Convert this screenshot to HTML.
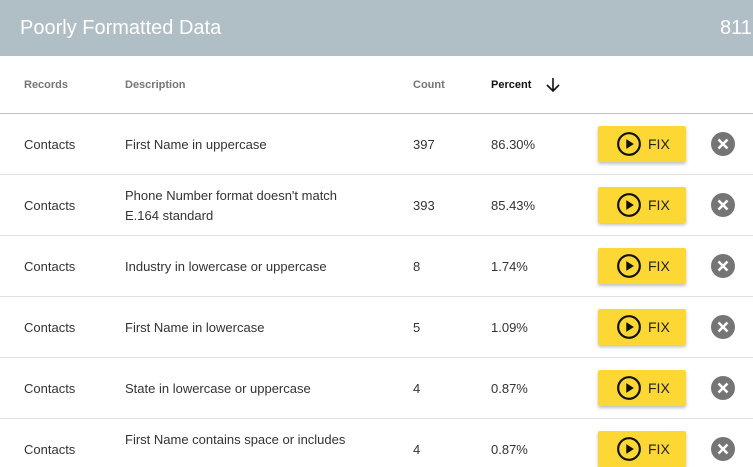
<!DOCTYPE html>
<html><head><style>
*{margin:0;padding:0;box-sizing:border-box}
body{width:753px;height:453px;overflow:hidden;background:#fff;font-family:"Liberation Sans",sans-serif;position:relative}
.hdr{position:absolute;left:0;top:0;width:753px;height:56px;background:#b0bec5;color:#fff;font-size:20px}
.hdr .t{position:absolute;left:20px;top:17px}
.hdr .n{position:absolute;left:720px;top:17px;white-space:nowrap}
.th{position:absolute;top:79px;font-size:11px;font-weight:bold;color:#757575}
.line{position:absolute;left:0;width:753px;height:1px;background:#e0e0e0}
.c{position:absolute;font-size:13px;color:#333;line-height:20px;margin-top:1px}
.fix{position:absolute;left:598px;width:88px;height:36px;background:#fdd835;border-radius:2px;box-shadow:0 2px 3px rgba(0,0,0,.25);font-size:14px;color:#212121}
.fix svg{position:absolute;left:18px;top:5px}
.fix span{position:absolute;left:50px;top:10px}
.x{position:absolute;left:711px;width:24px;height:24px}
</style></head><body>
<div class="hdr"><span class="t">Poorly Formatted Data</span><span class="n">811</span></div>
<div class="th" style="left:24px">Records</div>
<div class="th" style="left:125px">Description</div>
<div class="th" style="left:413px">Count</div>
<div class="th" style="left:491px;color:#111">Percent</div>
<svg style="position:absolute;left:545px;top:77px" width="16" height="16" viewBox="0 0 16 16"><path d="M8 1v13M2 8l6 6 6-6" stroke="#111" stroke-width="1.6" fill="none"/></svg>
<div class="line" style="top:113px;background:#bdbdbd"></div>
<div class="line" style="top:174px"></div>
<div class="line" style="top:235px"></div>
<div class="line" style="top:296px"></div>
<div class="line" style="top:357px"></div>
<div class="line" style="top:418px"></div>

<div class="c" style="left:24px;top:134px">Contacts</div><div class="c" style="left:125px;top:134px">First Name in uppercase</div><div class="c" style="left:413px;top:134px">397</div><div class="c" style="left:491px;top:134px">86.30%</div>
<div class="c" style="left:24px;top:195px">Contacts</div><div class="c" style="left:125px;top:185px">Phone Number format doesn't match<br>E.164 standard</div><div class="c" style="left:413px;top:195px">393</div><div class="c" style="left:491px;top:195px">85.43%</div>
<div class="c" style="left:24px;top:256px">Contacts</div><div class="c" style="left:125px;top:256px">Industry in lowercase or uppercase</div><div class="c" style="left:413px;top:256px">8</div><div class="c" style="left:491px;top:256px">1.74%</div>
<div class="c" style="left:24px;top:317px">Contacts</div><div class="c" style="left:125px;top:317px">First Name in lowercase</div><div class="c" style="left:413px;top:317px">5</div><div class="c" style="left:491px;top:317px">1.09%</div>
<div class="c" style="left:24px;top:378px">Contacts</div><div class="c" style="left:125px;top:378px">State in lowercase or uppercase</div><div class="c" style="left:413px;top:378px">4</div><div class="c" style="left:491px;top:378px">0.87%</div>
<div class="c" style="left:24px;top:439px">Contacts</div><div class="c" style="left:125px;top:429px">First Name contains space or includes</div><div class="c" style="left:413px;top:439px">4</div><div class="c" style="left:491px;top:439px">0.87%</div>

<div class="fix" style="top:126px"><svg width="26" height="26" viewBox="0 0 24 24"><circle cx="12" cy="12" r="10" stroke="#111" stroke-width="2" fill="none"/><path d="M9.5 7.5v9l7-4.5z" fill="#111"/></svg><span>FIX</span></div>
<div class="fix" style="top:187px"><svg width="26" height="26" viewBox="0 0 24 24"><circle cx="12" cy="12" r="10" stroke="#111" stroke-width="2" fill="none"/><path d="M9.5 7.5v9l7-4.5z" fill="#111"/></svg><span>FIX</span></div>
<div class="fix" style="top:248px"><svg width="26" height="26" viewBox="0 0 24 24"><circle cx="12" cy="12" r="10" stroke="#111" stroke-width="2" fill="none"/><path d="M9.5 7.5v9l7-4.5z" fill="#111"/></svg><span>FIX</span></div>
<div class="fix" style="top:309px"><svg width="26" height="26" viewBox="0 0 24 24"><circle cx="12" cy="12" r="10" stroke="#111" stroke-width="2" fill="none"/><path d="M9.5 7.5v9l7-4.5z" fill="#111"/></svg><span>FIX</span></div>
<div class="fix" style="top:370px"><svg width="26" height="26" viewBox="0 0 24 24"><circle cx="12" cy="12" r="10" stroke="#111" stroke-width="2" fill="none"/><path d="M9.5 7.5v9l7-4.5z" fill="#111"/></svg><span>FIX</span></div>
<div class="fix" style="top:431px"><svg width="26" height="26" viewBox="0 0 24 24"><circle cx="12" cy="12" r="10" stroke="#111" stroke-width="2" fill="none"/><path d="M9.5 7.5v9l7-4.5z" fill="#111"/></svg><span>FIX</span></div>

<svg class="x" style="top:132px" viewBox="0 0 24 24"><circle cx="12" cy="12" r="12" fill="#757575"/><path d="M7.5 7.5l9 9M16.5 7.5l-9 9" stroke="#fff" stroke-width="2.6"/></svg>
<svg class="x" style="top:193px" viewBox="0 0 24 24"><circle cx="12" cy="12" r="12" fill="#757575"/><path d="M7.5 7.5l9 9M16.5 7.5l-9 9" stroke="#fff" stroke-width="2.6"/></svg>
<svg class="x" style="top:254px" viewBox="0 0 24 24"><circle cx="12" cy="12" r="12" fill="#757575"/><path d="M7.5 7.5l9 9M16.5 7.5l-9 9" stroke="#fff" stroke-width="2.6"/></svg>
<svg class="x" style="top:315px" viewBox="0 0 24 24"><circle cx="12" cy="12" r="12" fill="#757575"/><path d="M7.5 7.5l9 9M16.5 7.5l-9 9" stroke="#fff" stroke-width="2.6"/></svg>
<svg class="x" style="top:376px" viewBox="0 0 24 24"><circle cx="12" cy="12" r="12" fill="#757575"/><path d="M7.5 7.5l9 9M16.5 7.5l-9 9" stroke="#fff" stroke-width="2.6"/></svg>
<svg class="x" style="top:437px" viewBox="0 0 24 24"><circle cx="12" cy="12" r="12" fill="#757575"/><path d="M7.5 7.5l9 9M16.5 7.5l-9 9" stroke="#fff" stroke-width="2.6"/></svg>
</body></html>
